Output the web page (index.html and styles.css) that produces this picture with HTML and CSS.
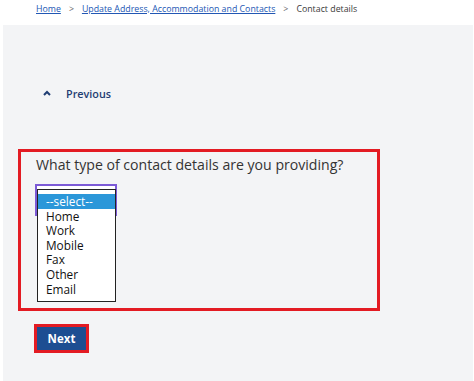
FILE: index.html
```html
<!DOCTYPE html>
<html>
<head>
<meta charset="utf-8">
<link rel="stylesheet" href="styles.css">
</head>
<body>
<div class="crumbs">
  <a class="crumb-link" href="#">Home</a>
  <span class="sep">&gt;</span>
  <a class="crumb-link" href="#">Update Address, Accommodation and Contacts</a>
  <span class="sep">&gt;</span>
  <span class="crumb-current">Contact details</span>
</div>
<main class="panel">
  <a class="prev" href="#">
    <svg class="caret" width="8" height="6" viewBox="0 0 8 6"><path d="M1 5 L4 2 L7 5" fill="none" stroke="#1f3d73" stroke-width="2"/></svg>
    <span>Previous</span>
  </a>
  <section class="question">
    <div class="q-label">What type of contact details are you providing?</div>
    <div class="select-wrap">
      <div class="select-box"></div>
      <ul class="options">
        <li class="opt selected">--select--</li>
        <li class="opt">Home</li>
        <li class="opt">Work</li>
        <li class="opt">Mobile</li>
        <li class="opt">Fax</li>
        <li class="opt">Other</li>
        <li class="opt">Email</li>
      </ul>
    </div>
  </section>
  <div class="next-wrap"><button class="next">Next</button></div>
</main>
</body>
</html>
```
FILE: styles.css
```css
html, body {
  margin: 0;
  padding: 0;
  background: #ffffff;
  font-family: "Open Sans", "Noto Sans", sans-serif;
}
.crumbs {
  height: 25px;
  display: flex;
  align-items: center;
  padding-left: 36px;
  font-size: 8.8px;
  color: #3a3a3a;
  box-sizing: border-box;
  padding-bottom: 8px;
}
.crumb-link {
  color: #2257b4;
  text-decoration: underline;
}
.sep {
  margin: 0 8px;
  color: #666;
}
.crumb-current {
  color: #3a3a3a;
}
.panel {
  margin: 0 1px 0 3px;
  height: 356px;
  background: #f3f4f6;
  padding: 0 0 0 15px;
  box-sizing: border-box;
  display: flex;
  flex-direction: column;
  align-items: flex-start;
}
.prev {
  margin-top: 61px;
  margin-left: 25px;
  display: flex;
  align-items: center;
  gap: 15px;
  color: #1f3d73;
  font-weight: 600;
  font-size: 10.8px;
  text-decoration: none;
  height: 14px;
}
.caret {
  display: block;
}
.question {
  margin-top: 49px;
  width: 362px;
  height: 162px;
  border: 3px solid #e31b23;
  box-sizing: border-box;
  padding: 3px 0 0 15px;
}
.q-label {
  font-size: 14.1px;
  color: #333333;
  line-height: 20px;
}
.select-wrap {
  position: relative;
  margin-top: 9px;
  margin-left: -1px;
  width: 82px;
  height: 32px;
}
.select-box {
  width: 82px;
  height: 32px;
  border: 2px solid #7b5ad6;
  box-sizing: border-box;
  background: #fff;
}
.options {
  position: absolute;
  left: 2px;
  top: 5px;
  width: 79px;
  margin: 0;
  padding: 4px 0 3px 0;
  list-style: none;
  background: #fff;
  border: 1px solid #222;
  box-sizing: border-box;
  height: 113px;
}
.opt {
  font-size: 11.8px;
  line-height: 14.6px;
  padding-left: 8px;
  color: #111;
}
.opt.selected {
  background: #2b97d9;
  color: #ffffff;
}
.next-wrap {
  margin-top: 13px;
  margin-left: 16px;
  border: 3px solid #e31b23;
}
.next {
  display: block;
  width: 49px;
  height: 23px;
  background: #1d4e92;
  color: #ffffff;
  border: 0;
  font-family: "Open Sans", "Noto Sans", sans-serif;
  font-weight: 700;
  font-size: 11.5px;
  padding: 0;
}
```
